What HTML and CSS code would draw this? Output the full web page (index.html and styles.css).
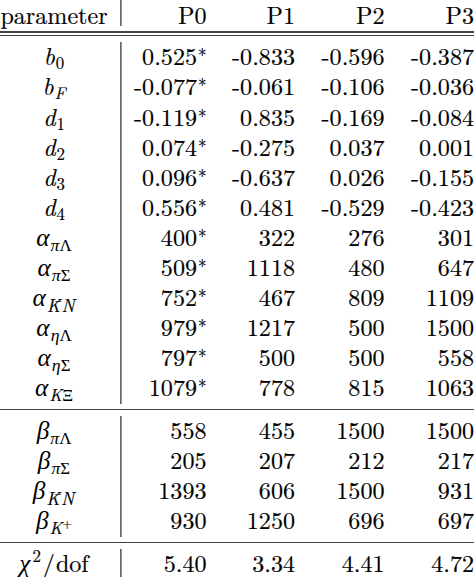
FILE: index.html
```html
<!DOCTYPE html>
<html>
<head>
<meta charset="utf-8">
<link rel="stylesheet" href="styles.css">
</head>
<body>
<div class="tbl">
  <div class="grp head">
    <div class="row"><span class="pc">parameter</span><span class="n">P0</span><span class="n">P1</span><span class="n">P2</span><span class="n">P3</span></div>
  </div>
  <div class="sep"><div class="line"></div><div class="line"></div></div>
  <div class="grp">
    <div class="row"><span class="pc"><i>b</i><span class="s">0</span></span><span class="n">0.525<span class="st">*</span></span><span class="n">-0.833</span><span class="n">-0.596</span><span class="n">-0.387</span></div>
    <div class="row"><span class="pc"><i>b</i><span class="s"><i>F</i></span></span><span class="n">-0.077<span class="st">*</span></span><span class="n">-0.061</span><span class="n">-0.106</span><span class="n">-0.036</span></div>
    <div class="row"><span class="pc"><i>d</i><span class="s">1</span></span><span class="n">-0.119<span class="st">*</span></span><span class="n">0.835</span><span class="n">-0.169</span><span class="n">-0.084</span></div>
    <div class="row"><span class="pc"><i>d</i><span class="s">2</span></span><span class="n">0.074<span class="st">*</span></span><span class="n">-0.275</span><span class="n">0.037</span><span class="n">0.001</span></div>
    <div class="row"><span class="pc"><i>d</i><span class="s">3</span></span><span class="n">0.096<span class="st">*</span></span><span class="n">-0.637</span><span class="n">0.026</span><span class="n">-0.155</span></div>
    <div class="row"><span class="pc"><i>d</i><span class="s">4</span></span><span class="n">0.556<span class="st">*</span></span><span class="n">0.481</span><span class="n">-0.529</span><span class="n">-0.423</span></div>
    <div class="row"><span class="pc"><i class="gk">α</i><span class="s g"><i class="gk">π</i><span class="gu">Λ</span></span></span><span class="n">400<span class="st">*</span></span><span class="n">322</span><span class="n">276</span><span class="n">301</span></div>
    <div class="row"><span class="pc"><i class="gk">α</i><span class="s g"><i class="gk">π</i><span class="gu">Σ</span></span></span><span class="n">509<span class="st">*</span></span><span class="n">1118</span><span class="n">480</span><span class="n">647</span></div>
    <div class="row"><span class="pc"><i class="gk">α</i><span class="s kb"><i>K&#x0304;</i><i>N</i></span></span><span class="n">752<span class="st">*</span></span><span class="n">467</span><span class="n">809</span><span class="n">1109</span></div>
    <div class="row"><span class="pc"><i class="gk">α</i><span class="s g"><i class="gk">η</i><span class="gu">Λ</span></span></span><span class="n">979<span class="st">*</span></span><span class="n">1217</span><span class="n">500</span><span class="n">1500</span></div>
    <div class="row"><span class="pc"><i class="gk">α</i><span class="s g"><i class="gk">η</i><span class="gu">Σ</span></span></span><span class="n">797<span class="st">*</span></span><span class="n">500</span><span class="n">500</span><span class="n">558</span></div>
    <div class="row"><span class="pc"><i class="gk">α</i><span class="s g"><i>K</i><span class="gu">Ξ</span></span></span><span class="n">1079<span class="st">*</span></span><span class="n">778</span><span class="n">815</span><span class="n">1063</span></div>
  </div>
  <div class="sep"><div class="line"></div></div>
  <div class="grp">
    <div class="row"><span class="pc"><i class="gk">β</i><span class="s g"><i class="gk">π</i><span class="gu">Λ</span></span></span><span class="n">558</span><span class="n">455</span><span class="n">1500</span><span class="n">1500</span></div>
    <div class="row"><span class="pc"><i class="gk">β</i><span class="s g"><i class="gk">π</i><span class="gu">Σ</span></span></span><span class="n">205</span><span class="n">207</span><span class="n">212</span><span class="n">217</span></div>
    <div class="row"><span class="pc"><i class="gk">β</i><span class="s kb"><i>K&#x0304;</i><i>N</i></span></span><span class="n">1393</span><span class="n">606</span><span class="n">1500</span><span class="n">931</span></div>
    <div class="row"><span class="pc"><i class="gk">β</i><span class="s g"><i>K</i><span class="ss">+</span></span></span><span class="n">930</span><span class="n">1250</span><span class="n">696</span><span class="n">697</span></div>
  </div>
  <div class="sep"><div class="line"></div></div>
  <div class="grp">
    <div class="row"><span class="pc"><i class="gk">χ</i><span class="sp">2</span><span class="sl">/</span>dof</span><span class="n">5.40</span><span class="n">3.34</span><span class="n">4.41</span><span class="n">4.72</span></div>
  </div>
</div>
</body>
</html>
```

FILE: styles.css
```css
html, body {
  margin: 0;
  padding: 0;
  overflow: hidden;
  background: #ffffff;
}

body {
  font-family: "Latin Modern Roman", "LM Roman 10", "Liberation Serif", serif;
  font-size: 24.1px;
  color: #000000;
  -webkit-text-stroke: 0.2px #000000;
}

.tbl {
  width: 474px;
}

.grp {
  background: linear-gradient(#666666, #666666) no-repeat 120px 0 / 1.7px 100%;
}

.row {
  display: grid;
  grid-template-columns: 122px 84.5px 88.5px 89.5px 89.5px;
  height: 30.1px;
  line-height: 27px;
  white-space: nowrap;
}

.head .row {
  height: 26px;
  padding-top: 1px;
  box-sizing: border-box;
}

.pc {
  padding-right: 14px;
  text-align: center;
}

.n {
  text-align: right;
}

.pc i {
  font-style: italic;
}

.gk {
  font-family: "Liberation Serif", serif;
  font-size: 105%;
  -webkit-text-stroke: 0px #000000;
}

.gu {
  font-family: "Liberation Serif", serif;
  -webkit-text-stroke: 0px #000000;
}

.s {
  font-size: 70%;
  line-height: 0;
  position: relative;
  top: 4px;
  margin-left: 1px;
}

.s.g {
  top: 5px;
}

.s.kb {
  top: 6px;
  font-size: 74%;
  letter-spacing: 1px;
}

.sp {
  font-size: 70%;
  line-height: 0;
  position: relative;
  top: -10px;
  margin-left: 2px;
}

.ss {
  font-size: 72%;
  line-height: 0;
  position: relative;
  top: -6px;
}

.sl {
  margin: 0 1px 0 2px;
}

.st {
  font-size: 17px;
  line-height: 0;
  position: relative;
  top: -4px;
  margin-left: 1px;
}

.sep {
  display: flex;
  flex-direction: column;
  gap: 2px;
  padding: 5px 0 6px;
}

.line {
  height: 1.7px;
  background: #444444;
}
```
